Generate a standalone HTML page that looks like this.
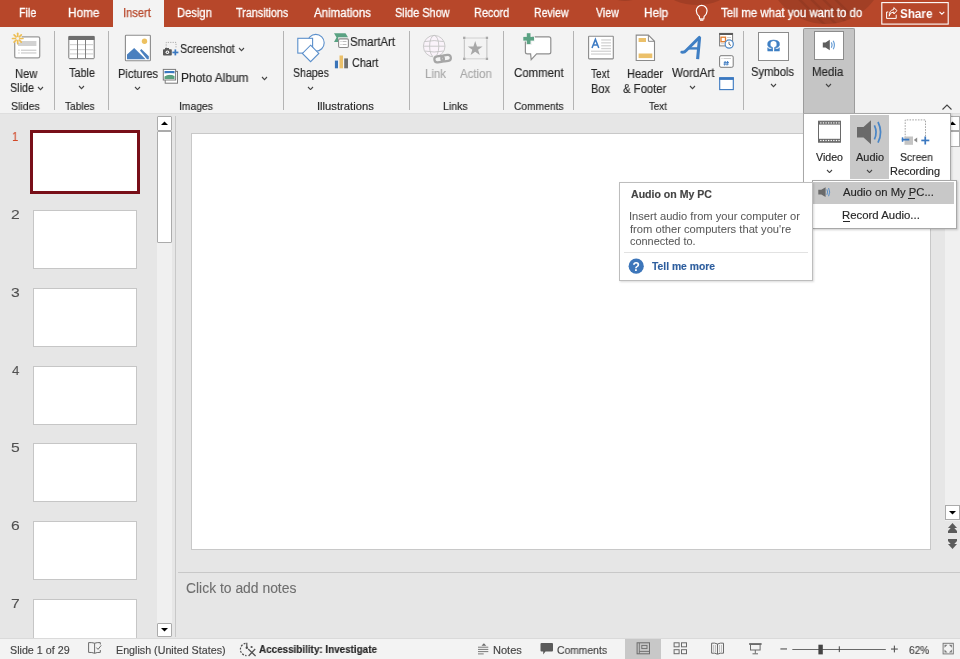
<!DOCTYPE html><html><head><meta charset="utf-8"><style>
html,body{margin:0;padding:0;}
body{width:960px;height:659px;overflow:hidden;position:relative;background:#E6E6E6;font-family:"Liberation Sans",sans-serif;}
body>div{position:absolute;}
.t{position:absolute;line-height:1;white-space:nowrap;will-change:transform;}
</style></head><body>
<div style="left:0px;top:0px;width:960px;height:27px;background:#B7472A"></div>
<svg style="position:absolute;left:0;top:0" width="960" height="27"><defs><clipPath id="tc"><rect width="960" height="27"/></clipPath><clipPath id="bc"><circle cx="826" cy="-36" r="60"/></clipPath></defs><g clip-path="url(#tc)" fill="#000" opacity="0.11"><circle cx="826" cy="-36" r="60"/><circle cx="697" cy="-52" r="57"/><circle cx="625" cy="-30" r="31"/></g><g clip-path="url(#bc)" stroke="#000" stroke-width="2.5" opacity="0.07"><line x1="780" y1="-20" x2="830" y2="30"/><line x1="792" y1="-20" x2="842" y2="30"/><line x1="804" y1="-20" x2="854" y2="30"/><line x1="816" y1="-20" x2="866" y2="30"/></g></svg>
<div style="left:113px;top:0px;width:51px;height:28px;background:#F3F3F3"></div>
<div style="left:0px;top:27px;width:960px;height:86px;background:#F3F3F3"></div>
<div style="left:0px;top:113px;width:960px;height:1px;background:#DEDEDE"></div>
<div style="left:54px;top:31px;width:1px;height:79px;background:#B4B4B4"></div>
<div style="left:108px;top:31px;width:1px;height:79px;background:#B4B4B4"></div>
<div style="left:283px;top:31px;width:1px;height:79px;background:#B4B4B4"></div>
<div style="left:409px;top:31px;width:1px;height:79px;background:#B4B4B4"></div>
<div style="left:503px;top:31px;width:1px;height:79px;background:#B4B4B4"></div>
<div style="left:573px;top:31px;width:1px;height:79px;background:#B4B4B4"></div>
<div style="left:743px;top:31px;width:1px;height:79px;background:#B4B4B4"></div>
<div class="t" id="t0" style="left:18.80px;top:6.70px;font-size:12px;color:#FFFFFF;-webkit-text-stroke:0.3px #FFFFFF;transform:scaleX(0.8939);transform-origin:0 0">File</div>
<div class="t" id="t1" style="left:67.80px;top:7.14px;font-size:12px;color:#FFFFFF;-webkit-text-stroke:0.3px #FFFFFF;transform:scaleX(0.9823);transform-origin:0 0">Home</div>
<div class="t" id="t2" style="left:176.60px;top:6.70px;font-size:12px;color:#FFFFFF;-webkit-text-stroke:0.3px #FFFFFF;transform:scaleX(0.9332);transform-origin:0 0">Design</div>
<div class="t" id="t3" style="left:236.40px;top:6.70px;font-size:12px;color:#FFFFFF;-webkit-text-stroke:0.3px #FFFFFF;transform:scaleX(0.8963);transform-origin:0 0">Transitions</div>
<div class="t" id="t4" style="left:314.00px;top:6.70px;font-size:12px;color:#FFFFFF;-webkit-text-stroke:0.3px #FFFFFF;transform:scaleX(0.9602);transform-origin:0 0">Animations</div>
<div class="t" id="t5" style="left:395.40px;top:6.70px;font-size:12px;color:#FFFFFF;-webkit-text-stroke:0.3px #FFFFFF;transform:scaleX(0.9095);transform-origin:0 0">Slide Show</div>
<div class="t" id="t6" style="left:474.40px;top:6.70px;font-size:12px;color:#FFFFFF;-webkit-text-stroke:0.3px #FFFFFF;transform:scaleX(0.9119);transform-origin:0 0">Record</div>
<div class="t" id="t7" style="left:534.40px;top:6.70px;font-size:12px;color:#FFFFFF;-webkit-text-stroke:0.3px #FFFFFF;transform:scaleX(0.8786);transform-origin:0 0">Review</div>
<div class="t" id="t8" style="left:595.80px;top:6.70px;font-size:12px;color:#FFFFFF;-webkit-text-stroke:0.3px #FFFFFF;transform:scaleX(0.8797);transform-origin:0 0">View</div>
<div class="t" id="t9" style="left:643.50px;top:6.70px;font-size:12px;color:#FFFFFF;-webkit-text-stroke:0.3px #FFFFFF;transform:scaleX(0.9766);transform-origin:0 0">Help</div>
<div class="t" id="t10" style="left:720.80px;top:6.70px;font-size:12px;color:#FFFFFF;-webkit-text-stroke:0.3px #FFFFFF;transform:scaleX(0.9536);transform-origin:0 0">Tell me what you want to do</div>
<div class="t" id="t11" style="left:123.20px;top:7.34px;font-size:12px;color:#B7472A;-webkit-text-stroke:0.25px #B7472A;transform:scaleX(0.9265);transform-origin:0 0">Insert</div>
<div class="t" id="t12" style="left:15.20px;top:67.74px;font-size:12px;color:#262626;-webkit-text-stroke:0.15px #262626;transform:scaleX(0.9329);transform-origin:0 0">New</div>
<div class="t" id="t13" style="left:9.60px;top:81.70px;font-size:12px;color:#262626;-webkit-text-stroke:0.15px #262626;transform:scaleX(0.9010);transform-origin:0 0">Slide</div>
<svg style="position:absolute;left:36.70px;top:86.20px" width="7" height="4.6"><polyline points="1,1 3.5,3.6 6,1" fill="none" stroke="#444" stroke-width="1.1"/></svg>
<div class="t" id="t14" style="left:11.00px;top:100.56px;font-size:11.2px;color:#262626;-webkit-text-stroke:0.15px #262626;transform:scaleX(0.9396);transform-origin:0 0">Slides</div>
<div class="t" id="t15" style="left:68.80px;top:67.10px;font-size:12px;color:#262626;-webkit-text-stroke:0.15px #262626;transform:scaleX(0.9065);transform-origin:0 0">Table</div>
<svg style="position:absolute;left:78.00px;top:85.20px" width="7" height="4.6"><polyline points="1,1 3.5,3.6 6,1" fill="none" stroke="#444" stroke-width="1.1"/></svg>
<div class="t" id="t16" style="left:65.40px;top:100.56px;font-size:11.2px;color:#262626;-webkit-text-stroke:0.15px #262626;transform:scaleX(0.9143);transform-origin:0 0">Tables</div>
<div class="t" id="t17" style="left:117.80px;top:67.50px;font-size:12px;color:#262626;-webkit-text-stroke:0.15px #262626;transform:scaleX(0.9243);transform-origin:0 0">Pictures</div>
<svg style="position:absolute;left:133.70px;top:85.70px" width="7" height="4.6"><polyline points="1,1 3.5,3.6 6,1" fill="none" stroke="#444" stroke-width="1.1"/></svg>
<div class="t" id="t18" style="left:179.80px;top:42.70px;font-size:12px;color:#262626;-webkit-text-stroke:0.15px #262626;transform:scaleX(0.9029);transform-origin:0 0">Screenshot</div>
<svg style="position:absolute;left:238.30px;top:47.20px" width="7" height="4.6"><polyline points="1,1 3.5,3.6 6,1" fill="none" stroke="#444" stroke-width="1.1"/></svg>
<div class="t" id="t19" style="left:180.60px;top:72.10px;font-size:12px;color:#262626;-webkit-text-stroke:0.15px #262626;transform:scaleX(0.9913);transform-origin:0 0">Photo Album</div>
<svg style="position:absolute;left:261.30px;top:76.00px" width="7" height="4.6"><polyline points="1,1 3.5,3.6 6,1" fill="none" stroke="#444" stroke-width="1.1"/></svg>
<div class="t" id="t20" style="left:178.60px;top:100.97px;font-size:11.2px;color:#262626;-webkit-text-stroke:0.15px #262626;transform:scaleX(0.9249);transform-origin:0 0">Images</div>
<div class="t" id="t21" style="left:292.80px;top:66.90px;font-size:12px;color:#262626;-webkit-text-stroke:0.15px #262626;transform:scaleX(0.8810);transform-origin:0 0">Shapes</div>
<svg style="position:absolute;left:307.10px;top:85.70px" width="7" height="4.6"><polyline points="1,1 3.5,3.6 6,1" fill="none" stroke="#444" stroke-width="1.1"/></svg>
<div class="t" id="t22" style="left:350.00px;top:35.82px;font-size:12px;color:#262626;-webkit-text-stroke:0.15px #262626;transform:scaleX(0.9507);transform-origin:0 0">SmartArt</div>
<div class="t" id="t23" style="left:352.40px;top:57.30px;font-size:12px;color:#262626;-webkit-text-stroke:0.15px #262626;transform:scaleX(0.8998);transform-origin:0 0">Chart</div>
<div class="t" id="t24" style="left:317.20px;top:100.56px;font-size:11.2px;color:#262626;-webkit-text-stroke:0.15px #262626;transform:scaleX(1.0033);transform-origin:0 0">Illustrations</div>
<div class="t" id="t25" style="left:425.20px;top:67.50px;font-size:12px;color:#A8A8A8;-webkit-text-stroke:0.15px #A8A8A8;transform:scaleX(0.9555);transform-origin:0 0">Link</div>
<div class="t" id="t26" style="left:459.60px;top:67.50px;font-size:12px;color:#A8A8A8;-webkit-text-stroke:0.15px #A8A8A8;transform:scaleX(0.9536);transform-origin:0 0">Action</div>
<div class="t" id="t27" style="left:443.00px;top:100.56px;font-size:11.2px;color:#262626;-webkit-text-stroke:0.15px #262626;transform:scaleX(0.9440);transform-origin:0 0">Links</div>
<div class="t" id="t28" style="left:513.80px;top:67.22px;font-size:12px;color:#262626;-webkit-text-stroke:0.15px #262626;transform:scaleX(0.9535);transform-origin:0 0">Comment</div>
<div class="t" id="t29" style="left:513.80px;top:100.86px;font-size:11.2px;color:#262626;-webkit-text-stroke:0.15px #262626;transform:scaleX(0.9160);transform-origin:0 0">Comments</div>
<div class="t" id="t30" style="left:591.20px;top:67.94px;font-size:12px;color:#262626;-webkit-text-stroke:0.15px #262626;transform:scaleX(0.8362);transform-origin:0 0">Text</div>
<div class="t" id="t31" style="left:591.00px;top:82.94px;font-size:12px;color:#262626;-webkit-text-stroke:0.15px #262626;transform:scaleX(0.9152);transform-origin:0 0">Box</div>
<div class="t" id="t32" style="left:626.60px;top:67.50px;font-size:12px;color:#262626;-webkit-text-stroke:0.15px #262626;transform:scaleX(0.9164);transform-origin:0 0">Header</div>
<div class="t" id="t33" style="left:622.80px;top:82.90px;font-size:12px;color:#262626;-webkit-text-stroke:0.15px #262626;transform:scaleX(0.9431);transform-origin:0 0">& Footer</div>
<div class="t" id="t34" style="left:671.60px;top:67.30px;font-size:12px;color:#262626;-webkit-text-stroke:0.15px #262626;transform:scaleX(0.9683);transform-origin:0 0">WordArt</div>
<svg style="position:absolute;left:688.70px;top:85.00px" width="7" height="4.6"><polyline points="1,1 3.5,3.6 6,1" fill="none" stroke="#444" stroke-width="1.1"/></svg>
<div class="t" id="t35" style="left:648.60px;top:100.97px;font-size:11.2px;color:#262626;-webkit-text-stroke:0.15px #262626;transform:scaleX(0.8675);transform-origin:0 0">Text</div>
<div class="t" id="t36" style="left:751.20px;top:66.30px;font-size:12px;color:#262626;-webkit-text-stroke:0.15px #262626;transform:scaleX(0.9356);transform-origin:0 0">Symbols</div>
<svg style="position:absolute;left:769.50px;top:83.30px" width="7" height="4.6"><polyline points="1,1 3.5,3.6 6,1" fill="none" stroke="#444" stroke-width="1.1"/></svg>
<div style="position:absolute;left:802.5px;top:27.5px;width:50px;height:85px;background:#C5C5C5;border:1px solid #9C9C9C;border-bottom:none;border-radius:2px 2px 0 0"></div>
<div style="position:absolute;left:814px;top:31px;width:28px;height:27px;background:#fff;border:1px solid #8C8C8C"></div>
<div style="position:absolute;left:758px;top:31.5px;width:29px;height:27px;background:#fff;border:1px solid #8C8C8C"></div>
<div class="t" id="t37" style="left:812.40px;top:66.30px;font-size:12px;color:#262626;-webkit-text-stroke:0.15px #262626;transform:scaleX(0.9554);transform-origin:0 0">Media</div>
<svg style="position:absolute;left:825.00px;top:83.30px" width="7" height="4.6"><polyline points="1,1 3.5,3.6 6,1" fill="none" stroke="#444" stroke-width="1.1"/></svg>
<svg style="position:absolute;left:941px;top:103px" width="12" height="8"><polyline points="1.5,6.5 6,2 10.5,6.5" fill="none" stroke="#444" stroke-width="1.1"/></svg>
<div style="left:157px;top:116px;width:15px;height:521px;background:#F0F0F0"></div>
<div style="position:absolute;left:157px;top:116px;width:13px;height:13px;background:#fff;border:1px solid #ABABAB;border-radius:1px"></div>
<svg style="position:absolute;left:157px;top:116px" width="15" height="15"><polygon points="4,9 7.5,5.5 11,9" fill="#000"/></svg>
<div style="position:absolute;left:157px;top:131px;width:13px;height:110px;background:#fff;border:1px solid #ABABAB;border-radius:1px"></div>
<div style="position:absolute;left:157px;top:623px;width:13px;height:12px;background:#fff;border:1px solid #ABABAB;border-radius:1px"></div>
<svg style="position:absolute;left:157px;top:623px" width="15" height="14"><polygon points="4,5 7.5,8.5 11,5" fill="#000"/></svg>
<div style="left:175px;top:116px;width:1px;height:521px;background:#C8C8C8"></div>
<div style="position:absolute;left:33px;top:132px;width:102px;height:57px;background:#fff;border:1px solid #C6C6C6"></div>
<div class="t" id="t38" style="left:11.80px;top:129.64px;font-size:13.5px;color:#D24726;-webkit-text-stroke:0.1px #D24726;transform:scaleX(0.8327);transform-origin:0 0">1</div>
<div style="position:absolute;left:33px;top:210px;width:102px;height:57px;background:#fff;border:1px solid #C6C6C6"></div>
<div class="t" id="t39" style="left:10.60px;top:207.50px;font-size:13.5px;color:#505050;-webkit-text-stroke:0.1px #505050;transform:scaleX(1.1607);transform-origin:0 0">2</div>
<div style="position:absolute;left:33px;top:288px;width:102px;height:57px;background:#fff;border:1px solid #C6C6C6"></div>
<div class="t" id="t40" style="left:10.60px;top:285.50px;font-size:13.5px;color:#505050;-webkit-text-stroke:0.1px #505050;transform:scaleX(1.1607);transform-origin:0 0">3</div>
<div style="position:absolute;left:33px;top:366px;width:102px;height:57px;background:#fff;border:1px solid #C6C6C6"></div>
<div class="t" id="t41" style="left:11.60px;top:363.64px;font-size:13.5px;color:#505050;-webkit-text-stroke:0.1px #505050;transform:scaleX(0.9672);transform-origin:0 0">4</div>
<div style="position:absolute;left:33px;top:443px;width:102px;height:57px;background:#fff;border:1px solid #C6C6C6"></div>
<div class="t" id="t42" style="left:10.60px;top:440.64px;font-size:13.5px;color:#505050;-webkit-text-stroke:0.1px #505050;transform:scaleX(1.1607);transform-origin:0 0">5</div>
<div style="position:absolute;left:33px;top:521px;width:102px;height:57px;background:#fff;border:1px solid #C6C6C6"></div>
<div class="t" id="t43" style="left:10.60px;top:518.50px;font-size:13.5px;color:#505050;-webkit-text-stroke:0.1px #505050;transform:scaleX(1.1607);transform-origin:0 0">6</div>
<div style="position:absolute;left:33px;top:599px;width:102px;height:57px;background:#fff;border:1px solid #C6C6C6"></div>
<div class="t" id="t44" style="left:10.60px;top:596.64px;font-size:13.5px;color:#505050;-webkit-text-stroke:0.1px #505050;transform:scaleX(1.1607);transform-origin:0 0">7</div>
<div style="position:absolute;left:30px;top:130px;width:104px;height:58px;border:3px solid #780F18;background:#fff"></div>
<div style="position:absolute;left:191px;top:133px;width:738px;height:415px;background:#fff;border:1px solid #C8C8C8"></div>
<div style="left:945px;top:116px;width:15px;height:405px;background:#F0F0F0"></div>
<div style="position:absolute;left:945px;top:116px;width:13px;height:13px;background:#fff;border:1px solid #ABABAB"></div>
<svg style="position:absolute;left:945px;top:116px" width="15" height="15"><polygon points="4,9 7.5,5.5 11,9" fill="#000"/></svg>
<div style="position:absolute;left:945px;top:131px;width:13px;height:14px;background:#fff;border:1px solid #ABABAB"></div>
<div style="position:absolute;left:945px;top:505px;width:13px;height:13px;background:#fff;border:1px solid #ABABAB"></div>
<svg style="position:absolute;left:945px;top:505px" width="15" height="15"><polygon points="4,6 7.5,9.5 11,6" fill="#000"/></svg>
<svg style="position:absolute;left:945px;top:521px" width="15" height="32"><g fill="#5A5A5A"><polygon points="7.5,2 12,7 3,7"/><polygon points="7.5,5 12,10 3,10"/><rect x="3" y="10" width="9" height="2"/><rect x="3" y="18" width="9" height="2"/><polygon points="3,20 12,20 7.5,25"/><polygon points="3,23 12,23 7.5,28"/></g></svg>
<div style="left:178px;top:572px;width:782px;height:1px;background:#C8C8C8"></div>
<div class="t" id="t45" style="left:186.00px;top:582.26px;font-size:13.8px;color:#6E6E6E;-webkit-text-stroke:0.1px #6E6E6E;transform:scaleX(1.0067);transform-origin:0 0">Click to add notes</div>
<div style="left:0px;top:638px;width:960px;height:21px;background:#F3F3F3"></div>
<div style="left:0px;top:638px;width:960px;height:1px;background:#DADADA"></div>
<div class="t" id="t46" style="left:10.00px;top:644.90px;font-size:10.6px;color:#444;-webkit-text-stroke:0.15px #444;transform:scaleX(1.0118);transform-origin:0 0">Slide 1 of 29</div>
<div class="t" id="t47" style="left:116.00px;top:644.90px;font-size:10.6px;color:#444;-webkit-text-stroke:0.15px #444;transform:scaleX(1.0112);transform-origin:0 0">English (United States)</div>
<div class="t" id="t48" style="left:259.40px;top:643.90px;font-size:10.6px;color:#262626;font-weight:bold;-webkit-text-stroke:0.15px #262626;transform:scaleX(0.9316);transform-origin:0 0">Accessibility: Investigate</div>
<div class="t" id="t49" style="left:492.60px;top:645.30px;font-size:10.6px;color:#444;-webkit-text-stroke:0.15px #444;transform:scaleX(1.0429);transform-origin:0 0">Notes</div>
<div class="t" id="t50" style="left:556.80px;top:645.19px;font-size:10.6px;color:#444;-webkit-text-stroke:0.15px #444;transform:scaleX(0.9756);transform-origin:0 0">Comments</div>
<div style="left:625px;top:639px;width:36px;height:20px;background:#C8C8C8"></div>
<div class="t" id="t51" style="left:909.00px;top:645.19px;font-size:10.6px;color:#444;-webkit-text-stroke:0.15px #444;transform:scaleX(0.9532);transform-origin:0 0">62%</div>

<svg style="position:absolute;left:0;top:0" width="960" height="659">
<!-- New slide -->
<rect x="14.7" y="36.9" width="25" height="21" rx="1.6" fill="#fff" stroke="#9A9A9A" stroke-width="1.3"/>
<rect x="18" y="41" width="18.4" height="5" fill="#D2D2D2"/>
<rect x="21" y="49.6" width="15.4" height="1.3" fill="#CFCFCF"/>
<rect x="21" y="52.3" width="15.4" height="1.3" fill="#CFCFCF"/>
<rect x="18.3" y="49.6" width="1.3" height="1.3" fill="#CFCFCF"/>
<rect x="18.3" y="52.3" width="1.3" height="1.3" fill="#CFCFCF"/>
<circle cx="17.7" cy="38.5" r="4.5" fill="#F3F3F3"/>
<g stroke="#EDBE55" stroke-width="1.7" stroke-linecap="round">
<line x1="17.7" y1="33.3" x2="17.7" y2="36.3"/><line x1="17.7" y1="40.7" x2="17.7" y2="43.7"/>
<line x1="12.5" y1="38.5" x2="15.5" y2="38.5"/><line x1="19.9" y1="38.5" x2="22.9" y2="38.5"/>
<line x1="14.1" y1="34.9" x2="16.1" y2="36.9"/><line x1="19.3" y1="40.1" x2="21.3" y2="42.1"/>
<line x1="21.3" y1="34.9" x2="19.3" y2="36.9"/><line x1="16.1" y1="40.1" x2="14.1" y2="42.1"/>
</g>
<!-- Table -->
<rect x="68.8" y="36.4" width="25.4" height="22.3" rx="0.8" fill="#fff" stroke="#7A7A7A" stroke-width="1"/>
<rect x="68.5" y="36" width="26" height="4" fill="#6E6E6E"/>
<g fill="#D3D3D3"><rect x="69.3" y="44" width="24.4" height="1.2"/><rect x="69.3" y="49" width="24.4" height="1.2"/><rect x="69.3" y="53.3" width="24.4" height="1.2"/></g>
<g fill="#808080"><rect x="77" y="40" width="1" height="18.5"/><rect x="85" y="40" width="1" height="18.5"/></g>
<!-- Pictures -->
<rect x="125.4" y="35.2" width="25" height="25.5" rx="0.8" fill="#fff" stroke="#8C8C8C" stroke-width="1.1"/>
<circle cx="144.5" cy="41.3" r="2.7" fill="#EDC160"/>
<polygon points="127,54.6 134.2,47.9 145.6,59.3 127,59.3" fill="#4A80BF"/>
<polygon points="140,50.4 141.3,49.1 148.8,56.3 148.8,59.3 147,59.3" fill="#4A80BF"/>
<!-- Screenshot -->
<g stroke="#9A9A9A" stroke-width="0.8" stroke-dasharray="1.2 1.2" fill="none"><polyline points="166.2,48 166.2,42.4 176,42.4 176,48"/></g>
<rect x="163" y="49.2" width="8.8" height="6.3" rx="0.8" fill="#5A5A5A"/>
<rect x="165" y="48" width="4" height="2" fill="#5A5A5A"/>
<circle cx="167.4" cy="52.3" r="1.8" fill="#fff"/><circle cx="167.4" cy="52.3" r="0.8" fill="#5A5A5A"/>
<g fill="#3A78C0"><rect x="172.4" y="51.6" width="6" height="1.7"/><rect x="174.5" y="49.4" width="1.7" height="6"/></g>
<!-- Photo album -->
<rect x="165.2" y="71.4" width="12.3" height="11.8" fill="#fff" stroke="#7A7A7A" stroke-width="1"/>
<rect x="163.3" y="69.4" width="12.3" height="10.6" fill="#fff" stroke="#7A7A7A" stroke-width="1"/>
<rect x="164.5" y="71" width="10" height="2.4" fill="#3A78C0"/>
<path d="M164.5,76.5 Q169,73.5 174.5,76 L174.5,79 L164.5,79 Z" fill="#5AA07E"/>
<path d="M164.5,74 Q169,72.5 174.5,73.8 L174.5,75.5 Q169,73.5 164.5,76 Z" fill="#fff"/>
<!-- Shapes -->
<circle cx="315.8" cy="42.8" r="8.4" fill="#fff" stroke="#5B8FCB" stroke-width="1.1"/>
<rect x="297.8" y="38.3" width="14.8" height="14.8" fill="#fff" stroke="#5B8FCB" stroke-width="1.1"/>
<polygon points="310.6,45.2 318.8,53.4 310.6,61.6 302.4,53.4" fill="#fff" stroke="#5B8FCB" stroke-width="1.1"/>
<!-- SmartArt -->
<polygon points="334,33.3 345.5,33.3 348,37.2 338.2,37.2 338.2,42 334,42 336.5,37.5" fill="#5AA283"/>
<rect x="338.6" y="38.9" width="9.8" height="8.6" rx="1.2" fill="#fff" stroke="#8A8A8A" stroke-width="1.1"/>
<g fill="#BDBDBD"><rect x="340.5" y="41" width="1" height="1"/><rect x="342.5" y="41" width="4" height="1"/><rect x="340.5" y="44" width="1" height="1"/><rect x="342.5" y="44" width="4" height="1"/></g>
<!-- Chart -->
<rect x="334.9" y="60.6" width="3.1" height="7.7" fill="#3A74B8"/>
<rect x="339.5" y="55.5" width="3.5" height="12.8" fill="#EBC06A"/>
<rect x="344.2" y="58.4" width="3.8" height="9.9" fill="#6E6E6E"/>
<!-- Link (disabled) -->
<g fill="#FAF3FA" stroke="#C4C4C4" stroke-width="0.9">
<circle cx="434.2" cy="46.2" r="10.8"/>
<ellipse cx="434.2" cy="46.2" rx="4.6" ry="10.8" fill="none"/>
<line x1="423.4" y1="46.2" x2="445" y2="46.2"/>
<path d="M424.6,41.6 Q434.2,39.6 443.8,41.6" fill="none"/>
<path d="M424.6,51 Q434.2,53 443.8,51" fill="none"/>
</g>
<rect x="433" y="55" width="20" height="8" fill="#F3F3F3"/>
<g fill="none" stroke="#A6A6A6" stroke-width="2.2">
<g transform="rotate(-8 442.5 58.5)"><rect x="434.3" y="55.6" width="9.6" height="6" rx="3"/>
<rect x="441.3" y="55.6" width="9.6" height="6" rx="3"/></g>
</g>
<!-- Action (disabled) -->
<g fill="none" stroke="#D0D0D0" stroke-width="1"><line x1="466" y1="38" x2="485.5" y2="38"/><line x1="466" y1="58.8" x2="485.5" y2="58.8"/></g>
<g fill="none" stroke="#B8B8B8" stroke-width="0.9"><line x1="464.3" y1="39.5" x2="464.3" y2="57.5"/><line x1="486.9" y1="39.5" x2="486.9" y2="57.5"/></g>
<g fill="#A8A8A8"><rect x="463.1" y="36.7" width="2.4" height="2.4"/><rect x="485.7" y="36.7" width="2.4" height="2.4"/><rect x="463.1" y="57.6" width="2.4" height="2.4"/><rect x="485.7" y="57.6" width="2.4" height="2.4"/></g>
<polygon points="475.2,41 477,46.4 482.6,46.4 478.1,49.7 479.8,55.1 475.2,51.8 470.6,55.1 472.3,49.7 467.8,46.4 473.4,46.4" fill="#A8A8A8"/>
<!-- Comment -->
<path d="M527.3,36.9 L548.9,36.9 Q550.8,36.9 550.8,38.8 L550.8,52 Q550.8,53.9 548.9,53.9 L536.6,53.9 L531.2,59.6 L530.6,53.9 L527.3,53.9 Q525.4,53.9 525.4,52 L525.4,38.8 Q525.4,36.9 527.3,36.9 Z" fill="#fff" stroke="#8F8F8F" stroke-width="1.2"/>
<rect x="522.5" y="36.3" width="12.5" height="5.2" fill="#F3F3F3"/>
<rect x="526" y="33" width="6" height="12" fill="#F3F3F3"/>
<g fill="#5AA283"><rect x="523.3" y="36.9" width="10.7" height="3.7"/><rect x="526.8" y="33.2" width="3.7" height="10.9"/></g>
<!-- Text box -->
<rect x="588.6" y="36.2" width="24.7" height="22.7" rx="0.6" fill="#fff" stroke="#8A8A8A" stroke-width="1.1"/>
<path d="M592,48 L595.4,39.4 L598.8,48 M593.2,45 L597.6,45" fill="none" stroke="#3D7BC4" stroke-width="1.5"/>
<g fill="#D3D3D3"><rect x="601.2" y="39.3" width="9.8" height="1.3"/><rect x="601.2" y="42.2" width="9.8" height="1.3"/><rect x="601.2" y="45.1" width="9.8" height="1.3"/><rect x="601.2" y="47.9" width="9.8" height="1.3"/><rect x="591" y="50.6" width="20" height="1.3"/><rect x="591" y="53.4" width="20" height="1.3"/></g>
<!-- Header & Footer -->
<path d="M636.2,35.1 L648.4,35.1 L654.5,41.3 L654.5,60.5 L636.2,60.5 Z" fill="#fff" stroke="#8A8A8A" stroke-width="1.1"/>
<path d="M648.4,35.1 L648.4,41.3 L654.5,41.3" fill="none" stroke="#8A8A8A" stroke-width="1"/>
<rect x="638.6" y="38" width="7.4" height="4" fill="#EBC06A"/>
<rect x="638.6" y="53.5" width="13.7" height="4.6" fill="#EBC06A"/>
<!-- WordArt -->
<path d="M681.8,52.2 Q684.2,52.8 686.4,50.2 L699.4,37.4" fill="none" stroke="#3F7FC4" stroke-width="2.9" stroke-linecap="round"/>
<path d="M699.6,37.2 L697.6,59.2" fill="none" stroke="#3F7FC4" stroke-width="3.1"/>
<line x1="688.5" y1="48.4" x2="697.8" y2="48.4" stroke="#3F7FC4" stroke-width="2.4"/>
<!-- Date time -->
<rect x="719.6" y="33.4" width="13" height="12.5" fill="#fff" stroke="#7A7A7A" stroke-width="1"/>
<rect x="719.3" y="33" width="13.6" height="2" fill="#5A5A5A"/>
<rect x="721" y="37.2" width="4.5" height="4.5" fill="none" stroke="#E07B2E" stroke-width="1.3"/>
<g fill="#C8C8C8"><rect x="727" y="37" width="4" height="0.9"/><rect x="727" y="39.3" width="4" height="0.9"/><rect x="721" y="43.3" width="3" height="0.9"/></g>
<circle cx="729.2" cy="44.1" r="4.1" fill="#fff" stroke="#4A86C6" stroke-width="1.2"/>
<path d="M729,41.8 L729,44.3 L731,45.5" fill="none" stroke="#444" stroke-width="0.8"/>
<!-- Slide number -->
<rect x="719.6" y="55.7" width="13.6" height="11.6" rx="1.4" fill="#fff" stroke="#7A7A7A" stroke-width="1"/>
<g fill="#C8C8C8"><rect x="721.5" y="58" width="1" height="0.9"/><rect x="723.5" y="58" width="7.5" height="0.9"/></g>
<path d="M725.2,61 L724.6,65.5 M727.6,61 L727,65.5 M723.8,62.4 L729,62.4 M723.5,64.1 L728.7,64.1" stroke="#3A78C0" stroke-width="0.9"/>
<!-- Object -->
<rect x="719.7" y="77.8" width="13.6" height="11.8" fill="#fff" stroke="#3A78C0" stroke-width="1.1"/>
<rect x="719.2" y="77.3" width="14.6" height="2.6" fill="#3A78C0"/>
<!-- Omega -->
<text x="773.6" y="51.2" text-anchor="middle" font-family="Liberation Serif" font-weight="bold" font-size="17" fill="#3F7FC4" stroke="#3F7FC4" stroke-width="0.3">&#937;</text>
<!-- Media speaker -->
<polygon points="822.8,42.6 825.5,42.6 829.8,39.8 829.8,50.3 825.5,47.5 822.8,47.5" fill="#5E5E5E"/>
<path d="M831.4,42.4 Q832.8,45 831.4,47.7" fill="none" stroke="#6A9FD6" stroke-width="1.2"/>
<path d="M833.2,40.8 Q835.6,45 833.2,49.3" fill="none" stroke="#6A9FD6" stroke-width="1.2"/>
<!-- lightbulb -->
<path d="M699.6,19 L699.3,16.5 Q696.3,14 696.3,10.8 A5.4,5.4 0 1 1 707.1,10.8 Q707.1,14 704.1,16.5 L703.8,19 Z" fill="none" stroke="#fff" stroke-width="1.2" stroke-linejoin="round"/>
<rect x="700" y="18.5" width="3.4" height="2.5" fill="#F5D8CF"/>
<!-- Share -->
<rect x="881.8" y="2.6" width="66.4" height="21.5" fill="none" stroke="#fff" stroke-width="1.1"/>
<path d="M888.3,12 L886.6,12 L886.6,18.4 L896.2,18.4 L896.2,14.7" fill="none" stroke="#fff" stroke-width="1"/>
<path d="M889.2,16.2 Q889.6,12.2 893.8,12 L893.8,14 L897,10.6 L893.8,7.6 L893.8,9.6 Q889,10 889.2,16.2 Z" fill="none" stroke="#fff" stroke-width="1"/>
<polyline points="939.5,11.8 941.9,14.2 944.3,11.8" fill="none" stroke="#fff" stroke-width="1.1"/>
</svg>

<div class="t" id="t52" style="left:900.00px;top:7.13px;font-size:13px;color:#fff;font-weight:bold;transform:scaleX(0.8973);transform-origin:0 0">Share</div>
<div style="position:absolute;left:802.5px;top:112.5px;width:146px;height:68px;background:#fff;border:1px solid #A8A8A8;box-shadow:1px 1px 2px rgba(0,0,0,0.15)"></div>
<div style="left:849.5px;top:114.5px;width:39.5px;height:64.5px;background:#C8C8C8"></div>
<svg style="position:absolute;left:0;top:0" width="960" height="659">
<!-- video film -->
<rect x="818.5" y="121.2" width="22" height="21" fill="#fff" stroke="#6A6A6A" stroke-width="1"/>
<rect x="818.5" y="121.2" width="22" height="3.4" fill="#6A6A6A"/>
<rect x="818.5" y="138.8" width="22" height="3.4" fill="#6A6A6A"/>
<g fill="#fff"><rect x="820.2" y="122.3" width="1.3" height="1.2"/><rect x="820.2" y="139.9" width="1.3" height="1.2"/><rect x="822.8" y="122.3" width="1.3" height="1.2"/><rect x="822.8" y="139.9" width="1.3" height="1.2"/><rect x="825.4" y="122.3" width="1.3" height="1.2"/><rect x="825.4" y="139.9" width="1.3" height="1.2"/><rect x="828.0" y="122.3" width="1.3" height="1.2"/><rect x="828.0" y="139.9" width="1.3" height="1.2"/><rect x="830.6" y="122.3" width="1.3" height="1.2"/><rect x="830.6" y="139.9" width="1.3" height="1.2"/><rect x="833.2" y="122.3" width="1.3" height="1.2"/><rect x="833.2" y="139.9" width="1.3" height="1.2"/><rect x="835.8" y="122.3" width="1.3" height="1.2"/><rect x="835.8" y="139.9" width="1.3" height="1.2"/><rect x="838.4" y="122.3" width="1.3" height="1.2"/><rect x="838.4" y="139.9" width="1.3" height="1.2"/></g>
<!-- audio speaker big -->
<polygon points="857,127 863.5,127 871,120.3 871,144.3 863.5,137.6 857,137.6" fill="#6A6A6A"/>
<path d="M874.4,125.3 Q877.8,132.3 874.4,139.3" fill="none" stroke="#4A86C6" stroke-width="1.7"/>
<path d="M878,122 Q883.2,132.3 878,142.6" fill="none" stroke="#4A86C6" stroke-width="1.7"/>
<!-- screen recording -->
<g stroke="#9A9A9A" stroke-width="0.9" stroke-dasharray="1.6 1.2" fill="none"><polyline points="905.2,138 905.2,119.9 925.5,119.9 925.5,138"/></g>
<rect x="904.5" y="136.5" width="8.5" height="8.3" fill="#C4C4C4"/>
<rect x="901.8" y="138.7" width="7.5" height="1.8" fill="#3A78C0"/><rect x="901.8" y="137.3" width="1.5" height="4.5" fill="#3A78C0"/>
<polygon points="913.8,140 917.2,137.5 917.2,142.5" fill="#8A8A8A"/>
<g fill="#3A78C0"><rect x="921.3" y="139.6" width="8" height="1.7"/><rect x="924.4" y="136.5" width="1.7" height="8"/></g>
</svg>
<div class="t" id="t53" style="left:816.00px;top:152.11px;font-size:10.6px;color:#262626;-webkit-text-stroke:0.15px #262626;transform:scaleX(1.0028);transform-origin:0 0">Video</div>
<svg style="position:absolute;left:825.70px;top:168.70px" width="7" height="4.6"><polyline points="1,1 3.5,3.6 6,1" fill="none" stroke="#444" stroke-width="1.1"/></svg>
<div class="t" id="t54" style="left:855.90px;top:152.11px;font-size:10.6px;color:#262626;-webkit-text-stroke:0.15px #262626;transform:scaleX(1.0330);transform-origin:0 0">Audio</div>
<svg style="position:absolute;left:865.70px;top:168.70px" width="7" height="4.6"><polyline points="1,1 3.5,3.6 6,1" fill="none" stroke="#444" stroke-width="1.1"/></svg>
<div class="t" id="t55" style="left:899.90px;top:152.19px;font-size:10.6px;color:#262626;-webkit-text-stroke:0.15px #262626;transform:scaleX(0.9805);transform-origin:0 0">Screen</div>
<div class="t" id="t56" style="left:890.30px;top:166.31px;font-size:10.6px;color:#262626;-webkit-text-stroke:0.15px #262626;transform:scaleX(1.0359);transform-origin:0 0">Recording</div>
<div style="position:absolute;left:811.5px;top:179.5px;width:143px;height:47px;background:#fff;border:1px solid #A8A8A8;box-shadow:1px 1px 2px rgba(0,0,0,0.2)"></div>
<div style="left:812.5px;top:182.3px;width:141.5px;height:21.5px;background:#C8C8C8"></div>
<svg style="position:absolute;left:0;top:0" width="960" height="659">
<polygon points="818.3,189.8 821.3,189.8 825.6,187.2 825.6,197 821.3,194.4 818.3,194.4" fill="#6A6A6A"/>
<path d="M826.9,189.4 Q828.3,192.1 826.9,194.8" fill="none" stroke="#4A86C6" stroke-width="0.9"/>
<path d="M828.6,188 Q830.8,192.1 828.6,196.2" fill="none" stroke="#4A86C6" stroke-width="0.9"/>
</svg>
<div class="t" id="t57" style="left:843.00px;top:187.12px;font-size:11.1px;color:#262626;-webkit-text-stroke:0.15px #262626;transform:scaleX(1.0165);transform-origin:0 0">Audio on My PC...</div>
<div style="left:908.2px;top:198.3px;width:6.5px;height:1px;background:#262626"></div>
<div class="t" id="t58" style="left:842.00px;top:209.52px;font-size:11.1px;color:#262626;-webkit-text-stroke:0.15px #262626;transform:scaleX(1.0256);transform-origin:0 0">Record Audio...</div>
<div style="left:843.3px;top:220.8px;width:6.5px;height:1px;background:#262626"></div>
<div style="position:absolute;left:619px;top:181.5px;width:192px;height:97.5px;background:#fff;border:1px solid #BDBDBD;box-shadow:1px 1px 2px rgba(0,0,0,0.15)"></div>
<div class="t" id="t59" style="left:630.80px;top:189.46px;font-size:10.5px;color:#444;font-weight:bold;-webkit-text-stroke:0.15px #444;transform:scaleX(1.0063);transform-origin:0 0">Audio on My PC</div>
<div class="t" id="t60" style="left:629.40px;top:211.39px;font-size:10.8px;color:#5A5A5A;-webkit-text-stroke:0.05px #5A5A5A;transform:scaleX(1.0322);transform-origin:0 0">Insert audio from your computer or</div>
<div class="t" id="t61" style="left:630.40px;top:223.99px;font-size:10.8px;color:#5A5A5A;-webkit-text-stroke:0.05px #5A5A5A;transform:scaleX(1.0351);transform-origin:0 0">from other computers that you're</div>
<div class="t" id="t62" style="left:630.40px;top:235.59px;font-size:10.8px;color:#5A5A5A;-webkit-text-stroke:0.05px #5A5A5A;transform:scaleX(1.0118);transform-origin:0 0">connected to.</div>
<div style="left:623.5px;top:251.5px;width:184px;height:1px;background:#E2E2E2"></div>
<svg style="position:absolute;left:0;top:0" width="960" height="659">
<circle cx="636.2" cy="266.2" r="7.6" fill="#3D76BA"/>
<text x="636.2" y="270.6" text-anchor="middle" font-family="Liberation Sans" font-weight="bold" font-size="12" fill="#fff">?</text>
</svg>
<div class="t" id="t63" style="left:652.00px;top:262.38px;font-size:10.3px;color:#2E5E9E;font-weight:bold;-webkit-text-stroke:0.15px #2E5E9E;transform:scaleX(1.0035);transform-origin:0 0">Tell me more</div>
<svg style="position:absolute;left:0;top:0" width="960" height="659">
<g fill="none" stroke="#6A6A6A" stroke-width="1">
<path d="M94.6,643.2 Q92,642.4 88.6,642.6 L88.6,652.4 Q92,652.2 94.6,653.3 Z"/>
<path d="M94.6,643.2 Q97,642.4 100.3,642.6 L100.3,644.5 M100.3,650 L100.3,652.4 Q97,652.2 94.6,653.3"/>
<polyline points="96.4,647.6 98,649.4 101.2,645.4"/>
</g>
<g fill="none" stroke="#505050" stroke-width="1.2">
<path d="M245.5,643.3 A6.2,6.2 0 0 0 246.5,655.6" stroke-dasharray="2 1.3"/>
<line x1="246.8" y1="642.8" x2="246.8" y2="647.6"/>
<line x1="248.2" y1="649" x2="255.6" y2="656"/><line x1="255.2" y1="649" x2="248.6" y2="656"/>
</g>
<circle cx="246.8" cy="647.8" r="1.2" fill="#505050"/>
<circle cx="251.6" cy="647" r="1.1" fill="#505050"/>
<polygon points="483.9,643.3 486.3,645.8 481.5,645.8" fill="#6A6A6A"/>
<g fill="#7A7A7A"><rect x="478" y="646.7" width="10.3" height="1"/><rect x="478" y="648.9" width="10.3" height="1"/><rect x="478" y="651.1" width="10.3" height="1"/><rect x="478" y="653.4" width="5.7" height="1"/></g>
<path d="M541.5,643 L552,643 Q553,643 553,644 L553,650.4 Q553,651.4 552,651.4 L545.5,651.4 L543.2,654.6 L543.2,651.4 L541.5,651.4 Q540.5,651.4 540.5,650.4 L540.5,644 Q540.5,643 541.5,643 Z" fill="#5A5A5A"/>
<!-- normal view -->
<rect x="637.1" y="642.8" width="12.4" height="11" fill="none" stroke="#6A6A6A" stroke-width="1"/>
<line x1="639.3" y1="643" x2="639.3" y2="653.6" stroke="#6A6A6A" stroke-width="0.9"/>
<line x1="639.3" y1="651.4" x2="649.3" y2="651.4" stroke="#6A6A6A" stroke-width="0.9"/>
<rect x="641.8" y="645.4" width="5.2" height="3.2" fill="none" stroke="#6A6A6A" stroke-width="0.9"/>
<!-- slide sorter -->
<g fill="none" stroke="#6A6A6A" stroke-width="1"><rect x="674.1" y="642.8" width="5" height="4"/><rect x="681.5" y="642.8" width="5" height="4"/><rect x="674.1" y="649.7" width="5" height="4"/><rect x="681.5" y="649.7" width="5" height="4"/></g>
<!-- reading -->
<g fill="none" stroke="#6A6A6A" stroke-width="1"><path d="M717.5,644 Q714.5,642.6 711.6,643.2 L711.6,653.2 Q714.5,652.7 717.5,654.2 Q720.5,652.7 723.5,653.2 L723.5,643.2 Q720.5,642.6 717.5,644 Z"/><line x1="717.5" y1="644" x2="717.5" y2="654"/></g>
<g stroke="#AAAAAA" stroke-width="0.7"><line x1="713.6" y1="645" x2="713.6" y2="652"/><line x1="715.5" y1="645" x2="715.5" y2="652.5"/><line x1="719.5" y1="645" x2="719.5" y2="652.5"/><line x1="721.5" y1="645" x2="721.5" y2="652"/></g>
<!-- slideshow -->
<g fill="none" stroke="#6A6A6A" stroke-width="1"><line x1="749.2" y1="644" x2="761.5" y2="644"/><rect x="750.5" y="644.5" width="9.6" height="5.5"/><line x1="755.3" y1="650" x2="755.3" y2="653.5"/><line x1="752.5" y1="653.8" x2="758" y2="653.8"/></g>
<rect x="749.2" y="643.2" width="12.3" height="1.6" fill="#6A6A6A"/>
<!-- zoom -->
<rect x="780.4" y="648.4" width="6.6" height="1.1" fill="#555"/>
<rect x="792.3" y="649" width="93.5" height="1" fill="#6A6A6A"/>
<rect x="818.4" y="644.7" width="4.4" height="9.7" fill="#444"/>
<rect x="838.8" y="646.3" width="1" height="5.8" fill="#444"/>
<rect x="891" y="648.5" width="6.8" height="1.1" fill="#555"/><rect x="893.85" y="645.6" width="1.1" height="6.8" fill="#555"/>
<!-- fit -->
<rect x="943.1" y="643.3" width="10.2" height="10.6" fill="none" stroke="#7A7A7A" stroke-width="1"/>
<g fill="#7A7A7A"><polygon points="944.5,644.7 947.5,644.7 944.5,647.7"/><polygon points="951.9,644.7 948.9,644.7 951.9,647.7"/><polygon points="944.5,652.5 947.5,652.5 944.5,649.5"/><polygon points="951.9,652.5 948.9,652.5 951.9,649.5"/></g>
</svg>
</body></html>
